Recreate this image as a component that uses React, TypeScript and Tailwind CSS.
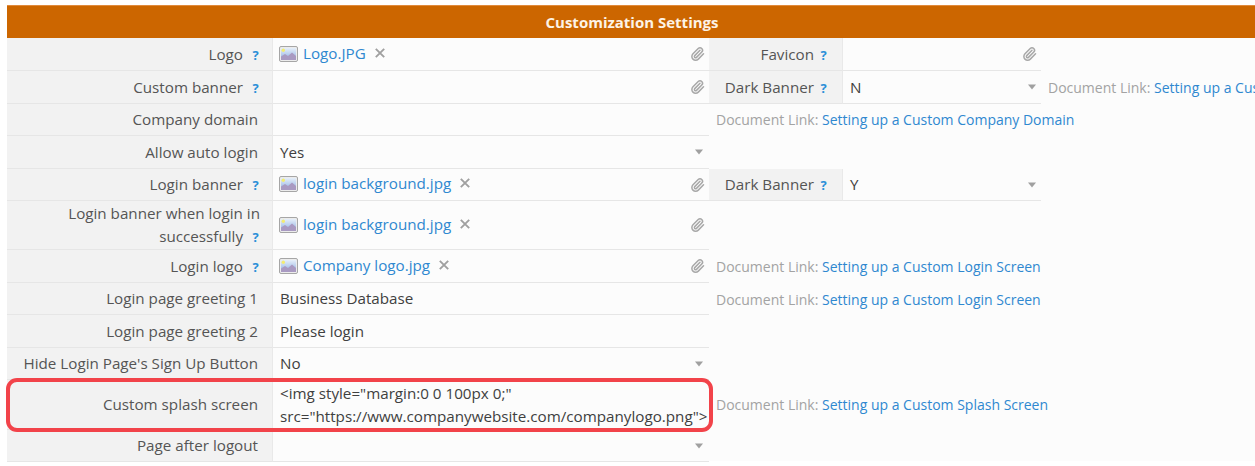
import React from "react";

const Help = ({ side }: { side?: boolean }) => (
  <span className={(side ? "ml-[5px]" : "ml-[8px]") + " inline-block w-[9px] text-center text-[13px] font-bold text-[#2b8fd8]"}>?</span>
);

const Clip = ({ className = "" }: { className?: string }) => (
  <svg className={"absolute top-1/2 -translate-y-1/2 " + className} width="15" height="15" viewBox="0 0 24 24" fill="none" stroke="#a8a8a8" strokeWidth="2.4" strokeLinecap="round" strokeLinejoin="round">
    <path d="m16 6-8.414 8.586a2 2 0 0 0 2.829 2.829l8.414-8.586a4 4 0 1 0-5.657-5.657l-8.379 8.551a6 6 0 1 0 8.485 8.485l8.379-8.551" />
  </svg>
);

const Arrow = ({ className = "" }: { className?: string }) => (
  <span className={"absolute top-1/2 -translate-y-1/2 h-0 w-0 border-x-[4.5px] border-t-[5px] border-x-transparent border-t-[#a0a0a0] " + className} />
);

const Thumb = () => (
  <svg className="ml-[-1px] mr-[5px] shrink-0" width="19" height="16" viewBox="0 0 19 16">
    <defs>
      <linearGradient id="sky" x1="0" y1="0" x2="0" y2="1">
        <stop offset="0" stopColor="#e6effa" />
        <stop offset="1" stopColor="#8fb0e2" />
      </linearGradient>
    </defs>
    <rect x="0.5" y="0.5" width="18" height="15" rx="1.5" fill="#ececec" stroke="#a6a6a6" />
    <rect x="2" y="2" width="15" height="12" fill="url(#sky)" />
    <circle cx="4.3" cy="4.3" r="1.7" fill="#f4ec70" />
    <path d="M2 14 V10.5 L6 8 L9 10 L13 6.5 L17 10 V14 Z" fill="#a99ac2" />
  </svg>
);

const File = ({ name }: { name: string }) => (
  <span className="flex items-center">
    <Thumb />
    <span className="mt-[-2px] text-[#2f88d0]">{name}</span>
    <svg className="ml-[9px] mt-[-2px]" width="10" height="10" viewBox="0 0 10 10" stroke="#a0a0a0" strokeWidth="1.9"><path d="M0.8 0.8 L9.2 9.2 M9.2 0.8 L0.8 9.2" /></svg>
  </span>
);

const Doc = ({ title, className = "ml-[7px]" }: { title: string; className?: string }) => (
  <span className={"whitespace-nowrap text-[14px] " + className}>
    <span className="text-[#a3a3a3]">Document Link: </span>
    <span className="text-[#2f88d0]">{title}</span>
  </span>
);

const Row = ({ h, label, help, value, clip, arrow, children }: { h: string; label: React.ReactNode; help?: boolean; value?: React.ReactNode; clip?: boolean; arrow?: boolean; children?: React.ReactNode }) => (
  <div className={"flex items-stretch " + h}>
    <div className={(help ? "pr-[12px] " : "pr-[14px] ") + "flex w-[266px] shrink-0 items-center justify-end border-b border-b-[#e6e6e6] border-r border-r-[#e9e9e9] bg-[#f2f2f2] text-right text-[#555]"}>
      <span>{label}{help && <Help />}</span>
    </div>
    <div className="relative flex w-[436px] shrink-0 items-center border-b border-b-[#e6e6e6] pl-[7px] text-[#404040]">
      {value}
      {clip && <Clip className="right-[4px]" />}
      {arrow && <Arrow className="right-[6px]" />}
    </div>
    {children}
  </div>
);

const Side = ({ label, value, clip, arrow }: { label: string; value?: string; clip?: boolean; arrow?: boolean }) => (
  <>
    <div className="flex w-[134px] shrink-0 items-center justify-end border-b border-b-[#e6e6e6] border-r border-r-[#e9e9e9] bg-[#f2f2f2] pr-[14px] text-[#555]">
      <span>{label}<Help side /></span>
    </div>
    <div className="relative flex w-[198px] shrink-0 items-center border-b border-b-[#e6e6e6] pl-[7px] text-[#404040]">
      {value}
      {clip && <Clip className="right-[4px]" />}
      {arrow && <Arrow className="right-[5px]" />}
    </div>
  </>
);

const Center = ({ children }: { children: React.ReactNode }) => <div className="flex items-center">{children}</div>;

export default function App() {
  return (
    <div className="relative h-[466px] w-[1255px] overflow-hidden bg-white pl-[7px] pt-[5px] text-[15.2px] font-['Open_Sans',sans-serif]">
      <div className="h-[456px] w-[1248px] bg-[#fcfcfc]">
        <div className="flex h-[33px] items-center justify-center border-t border-t-[#e08a3c] bg-[#cc6600]">
          <span className="ml-[2px] text-[15px] font-bold text-[#fdf3e6]">Customization Settings</span>
        </div>
        <Row h="h-[33px]" label="Logo" help value={<File name="Logo.JPG" />} clip>
          <Side label="Favicon" clip />
        </Row>
        <Row h="h-[33px]" label="Custom banner" help clip>
          <Side label="Dark Banner" value="N" arrow />
          <Center><Doc title="Setting up a Custom Company Domain" /></Center>
        </Row>
        <Row h="h-[32px]" label="Company domain">
          <Center><Doc title="Setting up a Custom Company Domain" className="ml-[7px] mt-[-2px]" /></Center>
        </Row>
        <Row h="h-[33px]" label="Allow auto login" value="Yes" arrow />
        <Row h="h-[32px]" label="Login banner" help value={<File name="login background.jpg" />} clip>
          <Side label="Dark Banner" value="Y" arrow />
        </Row>
        <Row h="h-[49px]" label={<span className="leading-[23px]">Login banner when login in<br />successfully</span>} help value={<File name="login background.jpg" />} clip />
        <Row h="h-[33px]" label="Login logo" help value={<File name="Company logo.jpg" />} clip>
          <Center><Doc title="Setting up a Custom Login Screen" /></Center>
        </Row>
        <Row h="h-[32px]" label="Login page greeting 1" value="Business Database">
          <Center><Doc title="Setting up a Custom Login Screen" /></Center>
        </Row>
        <Row h="h-[33px]" label="Login page greeting 2" value="Please login" />
        <Row h="h-[32px]" label="Hide Login Page's Sign Up Button" value="No" arrow />
        <Row h="h-[50px]" label="Custom splash screen" value={<span className="leading-[23px]">&lt;img style="margin:0 0 100px 0;"<br />src="https://www.companywebsite.com/companylogo.png"&gt;</span>}>
          <Center><Doc title="Setting up a Custom Splash Screen" className="ml-[7px] mt-[-2px]" /></Center>
        </Row>
        <Row h="h-[32px]" label="Page after logout" arrow />
      </div>
      <div className="absolute left-[6px] top-[378px] h-[54px] w-[707px] rounded-[11px] border-[4px] border-[#f2434a]" />
    </div>
  );
}
